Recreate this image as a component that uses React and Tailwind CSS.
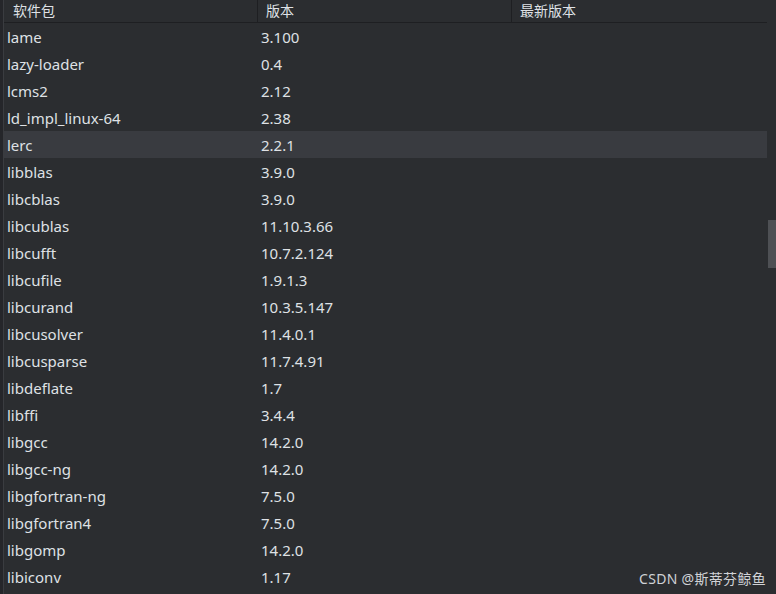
import React from "react";

const PACKAGES = [
  ["lame", "3.100"],
  ["lazy-loader", "0.4"],
  ["lcms2", "2.12"],
  ["ld_impl_linux-64", "2.38"],
  ["lerc", "2.2.1"],
  ["libblas", "3.9.0"],
  ["libcblas", "3.9.0"],
  ["libcublas", "11.10.3.66"],
  ["libcufft", "10.7.2.124"],
  ["libcufile", "1.9.1.3"],
  ["libcurand", "10.3.5.147"],
  ["libcusolver", "11.4.0.1"],
  ["libcusparse", "11.7.4.91"],
  ["libdeflate", "1.7"],
  ["libffi", "3.4.4"],
  ["libgcc", "14.2.0"],
  ["libgcc-ng", "14.2.0"],
  ["libgfortran-ng", "7.5.0"],
  ["libgfortran4", "7.5.0"],
  ["libgomp", "14.2.0"],
  ["libiconv", "1.17"],
];

const FONT = { fontFamily: '"Noto Sans", "Noto Sans CJK SC", sans-serif' };

export default function App() {
  return (
    <div
      className="relative w-[776px] h-[594px] overflow-hidden bg-[#25262a] pl-[3px] flex text-[#dfe1e5]"
      style={FONT}
    >
      {/* Table */}
      <div className="flex-1 bg-[#2b2d30] border-l border-[#3a3c40]">
        <div className="flex h-[23px] border-b border-[#1e1f22] text-[14px] leading-[22px]">
          <div className="w-[254px] pl-[9px] border-r border-[#1e1f22]">软件包</div>
          <div className="w-[254px] pl-[8px] border-r border-[#1e1f22]">版本</div>
          <div className="flex-1 pl-[8px]">最新版本</div>
        </div>
        {PACKAGES.map(([name, ver]) => (
          <div
            key={name}
            className={`flex h-[27px] items-center pt-[1px] text-[15px] ${
              name === "lerc" ? "bg-[#393b40]" : ""
            }`}
          >
            <div className="w-[254px] pl-[3px]">{name}</div>
            <div className="w-[254px] pl-[3px]">{ver}</div>
            <div className="flex-1" />
          </div>
        ))}
      </div>

      {/* Scrollbar */}
      <div className="w-[9px] bg-[#2b2d30] pt-[220px]">
        <div className="w-[8px] h-[48px] ml-[1px] bg-[#4e5054]" />
      </div>

      {/* Watermark */}
      <div className="absolute right-[10px] bottom-[5px] text-[14px] text-[#d0d2d6] tracking-[0.3px]">
        CSDN @斯蒂芬鲸鱼
      </div>
    </div>
  );
}
